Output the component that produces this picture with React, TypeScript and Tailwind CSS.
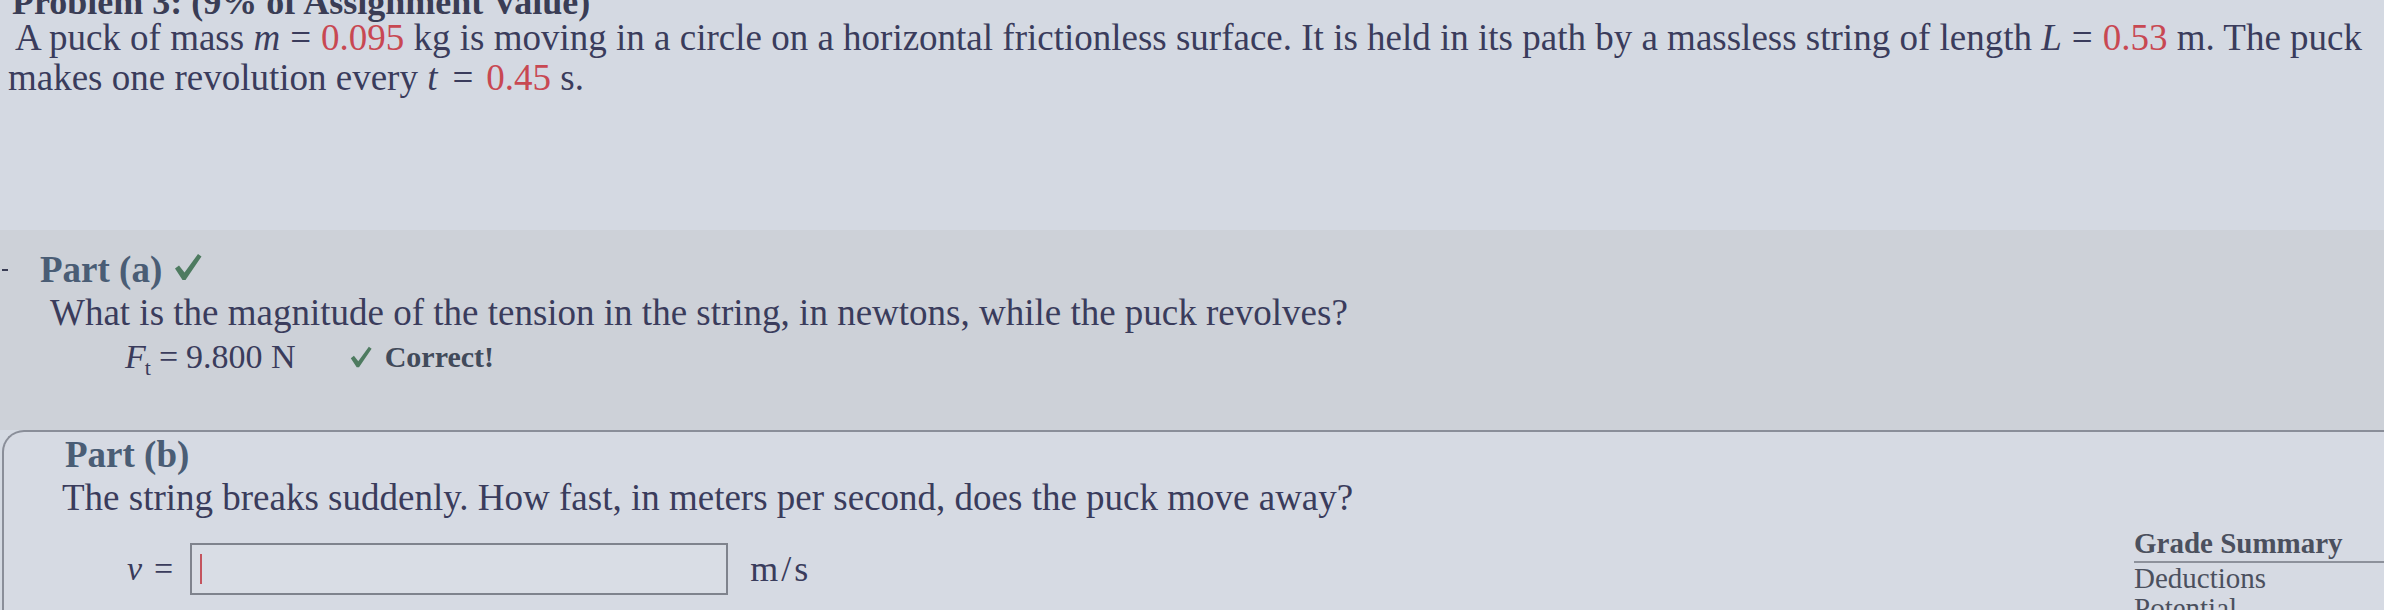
import React from "react";

const Check = ({ w, h }: { w: number; h: number }) => (
  <svg width={w} height={h} viewBox="0 0 28 28" className="inline-block">
    <path d="M1 15.5 L5 12.5 L10.5 19.5 L24 1 L27.5 3.5 L11.5 27 L8.5 27 Z" fill="#4e7b60" />
  </svg>
);

export default function App() {
  return (
    <div
      className="w-[2384px] h-[610px] overflow-hidden bg-[#d4d9e2] text-[#3a3c5c]"
      style={{ fontFamily: '"Liberation Serif", "Times New Roman", serif' }}
    >
      {/* Header (cut off at top) */}
      <div className="mt-[-18px] pl-[12px] text-[36px] leading-[40px] font-bold text-[#3a3d55] whitespace-nowrap">
        Problem 3: (9% of Assignment Value)
      </div>

      {/* Problem statement */}
      <p className="mt-[-4px] pl-[8px] indent-[7px] text-[37px] leading-[40px]">
        A puck of mass <i>m</i>
        <span className="mx-[10px]">=</span>
        <span className="text-[#c84852]">0.095</span> kg is moving in a circle on a horizontal frictionless
        surface. It is held in its path by a massless string of length <i>L</i>
        <span className="mx-[10px]">=</span>
        <span className="text-[#c84852]">0.53</span> m. The puck makes one revolution every{" "}
        <i className="mr-[2px]">t</i>
        <span className="mx-[13px]">=</span>
        <span className="text-[#c84852]">0.45</span> s.
      </p>

      {/* Part (a) */}
      <div className="mt-[132px] h-[200px] bg-[#cdd1d8] pt-[20px]">
        <div className="flex items-center h-[40px]">
          <div className="ml-[2px] w-[6px] h-[2px] bg-[#3a3d55]" />
          <div className="ml-[32px] text-[37px] leading-[40px] font-bold text-[#4a5d75]">Part (a)</div>
          <div className="ml-[12px] mt-[-6px] flex items-center">
            <Check w={28} h={28} />
          </div>
        </div>
        <div className="mt-[3px] pl-[50px] text-[37px] leading-[40px]">
          What is the magnitude of the tension in the string, in newtons, while the puck revolves?
        </div>
        <div className="mt-[4px] pl-[125px] flex items-center text-[34px] leading-[40px]">
          <span className="whitespace-nowrap">
            <i>F</i>
            <span className="inline-block text-[22px] leading-[22px] translate-y-[7px] ml-[-1px]">t</span>
          </span>
          <span className="mx-[8px]">=</span>
          <span>9.800 N</span>
          <span className="ml-[54px] flex items-center">
            <Check w={22} h={22} />
          </span>
          <span className="ml-[13px] text-[30px] font-bold text-[#414a5a]">Correct!</span>
        </div>
      </div>

      {/* Part (b) */}
      <div className="ml-[2px] h-[200px] border-t-2 border-l-2 border-[#8a8e99] rounded-tl-[22px] bg-[#d6dae3]">
        <div className="pt-[3px] pl-[61px] text-[37px] leading-[40px] font-bold text-[#4a5d75]">Part (b)</div>
        <div className="mt-[3px] pl-[58px] text-[37px] leading-[40px]">
          The string breaks suddenly. How fast, in meters per second, does the puck move away?
        </div>
        <div className="mt-[8px] flex items-start">
          <div className="mt-[17px] pl-[123px] flex items-center">
            <span className="text-[34px] leading-[40px] whitespace-nowrap">
              <i>v</i>
              <span className="ml-[12px]">=</span>
            </span>
            <div className="ml-[17px] w-[538px] h-[52px] border-2 border-[#7f838d] bg-[#d9dde5] flex items-center">
              <div className="ml-[8px] w-[2px] h-[30px] bg-[#c4545e]" />
            </div>
            <span className="ml-[22px] text-[36px] leading-[40px] whitespace-nowrap">
              m<span className="mx-[3px]">/</span>s
            </span>
          </div>
          <div className="ml-auto w-[250px] text-[#4b505e]">
            <div className="text-[29px] leading-[34px] font-bold pb-[1px] border-b-2 border-[#8d919b]">
              Grade Summary
            </div>
            <div className="text-[29px] leading-[30px]">Deductions</div>
            <div className="text-[29px] leading-[30px]">Potential</div>
          </div>
        </div>
      </div>
    </div>
  );
}
